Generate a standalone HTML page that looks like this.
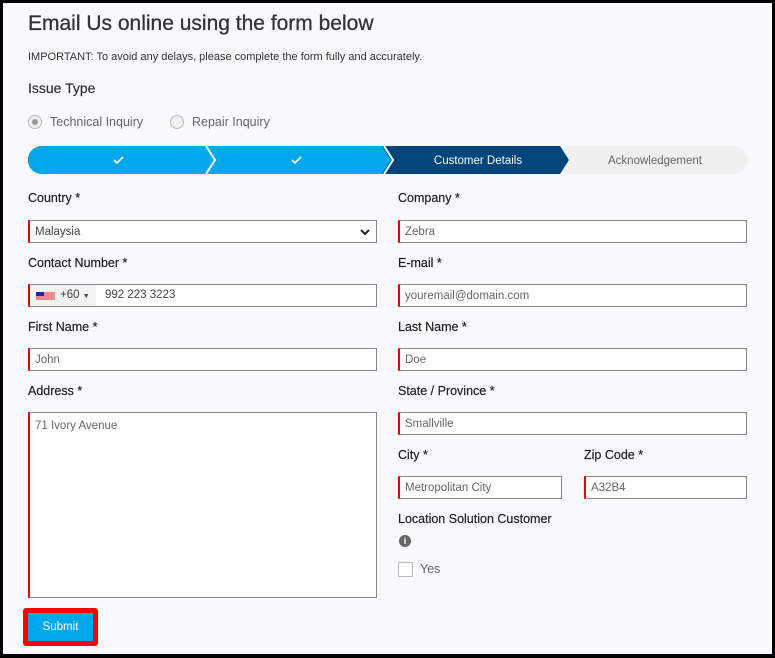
<!DOCTYPE html>
<html><head><meta charset="utf-8"><style>
*{box-sizing:border-box;margin:0;padding:0}
body{width:775px;height:658px;background:#000;font-family:"Liberation Sans",sans-serif;position:relative;overflow:hidden}
.pg{position:absolute;left:3px;top:3px;width:769px;height:651px;background:#f9f9fe}
.a{position:absolute}
.lbl{font-size:12.5px;color:#222;-webkit-text-stroke:0.2px #222}
.in{position:absolute;height:23px;background:#fff;border:1px solid #888;border-left:2px solid #e00;font-size:11.5px;color:#666;padding:5px 0 0 5px}
.rad{position:absolute;width:14px;height:14px;border-radius:50%;border:1px solid #bbb;background:#f0f0f0}
</style></head><body><div class="pg"></div>
<div class="a" style="left:28px;top:12px;font-size:21px;color:#333;-webkit-text-stroke:0.3px #333">Email Us online using the form below</div>
<div class="a" style="left:28px;top:51px;font-size:11px;color:#333">IMPORTANT: To avoid any delays, please complete the form fully and accurately.</div>
<div class="a" style="left:28px;top:80px;font-size:14px;color:#333;-webkit-text-stroke:0.2px #333">Issue Type</div>
<div class="rad" style="left:28px;top:115px"><div style="position:absolute;left:3px;top:3px;width:6px;height:6px;border-radius:50%;background:#999"></div></div>
<div class="a" style="left:50px;top:115px;font-size:12.5px;color:#666">Technical Inquiry</div>
<div class="rad" style="left:170px;top:115px"></div>
<div class="a" style="left:192px;top:115px;font-size:12.5px;color:#666">Repair Inquiry</div>
<svg class="a" style="left:28px;top:146px" width="719" height="28">
<rect x="0" y="0" width="719" height="28" rx="14" fill="#f0f0f0"/>
<path d="M14 0H532L541 14L532 28H14A14 14 0 0 1 14 0Z" fill="#00457c"/>
<path d="M14 0H354L363 14L354 28H14A14 14 0 0 1 14 0Z" fill="#00a8ea"/>
<path d="M178 0L187 14L178 28M356 0L365 14L356 28" stroke="#fff" stroke-width="2" fill="none"/>
<path d="M86 14l3 3l6-6M264 14l3 3l6-6" stroke="#fff" stroke-width="1.6" fill="none"/>
<text x="450" y="18" fill="#fff" font-size="11.5" text-anchor="middle" font-family="Liberation Sans">Customer Details</text>
<text x="627" y="18" fill="#666" font-size="11.5" text-anchor="middle" font-family="Liberation Sans">Acknowledgement</text>
</svg>
<div class="a lbl" style="left:28px;top:191px">Country *</div>
<div class="a lbl" style="left:398px;top:191px">Company *</div>
<div class="in" style="left:28px;top:220px;width:349px;color:#444">Malaysia<svg style="position:absolute;right:6px;top:7px" width="10" height="8"><path d="M1 2l4 4l4-4" stroke="#222" stroke-width="2" fill="none"/></svg></div>
<div class="in" style="left:398px;top:220px;width:349px">Zebra</div>
<div class="a lbl" style="left:28px;top:256px">Contact Number *</div>
<div class="a lbl" style="left:398px;top:256px">E-mail *</div>
<div class="in" style="left:28px;top:284px;width:349px;padding:0;color:#444"><div style="position:absolute;left:0;top:0;width:66px;height:21px;background:#f2f2f2"></div><div style="position:absolute;left:6px;top:7px;width:19px;height:8px;background:#e88;"><div style="width:8px;height:4px;background:#22a"></div></div><span style="position:absolute;left:30px;top:4px">+60 <span style="font-size:7px">▼</span></span><span style="position:absolute;left:75px;top:4px">992 223 3223</span></div>
<div class="in" style="left:398px;top:284px;width:349px">youremail@domain.com</div>
<div class="a lbl" style="left:28px;top:320px">First Name *</div>
<div class="a lbl" style="left:398px;top:320px">Last Name *</div>
<div class="in" style="left:28px;top:348px;width:349px">John</div>
<div class="in" style="left:398px;top:348px;width:349px">Doe</div>
<div class="a lbl" style="left:28px;top:384px">Address *</div>
<div class="a lbl" style="left:398px;top:384px">State / Province *</div>
<div class="in" style="left:28px;top:412px;width:349px;height:186px;padding-top:7px">71 Ivory Avenue</div>
<div class="in" style="left:398px;top:412px;width:349px">Smallville</div>
<div class="a lbl" style="left:398px;top:448px">City *</div>
<div class="a lbl" style="left:584px;top:448px">Zip Code *</div>
<div class="in" style="left:398px;top:476px;width:164px">Metropolitan City</div>
<div class="in" style="left:584px;top:476px;width:163px">A32B4</div>
<div class="a lbl" style="left:398px;top:512px">Location Solution Customer</div>
<div class="a" style="left:399px;top:535px;width:12px;height:12px;border-radius:50%;background:#666;color:#fff;font-size:9px;text-align:center;line-height:12px;font-weight:bold">i</div>
<div class="a" style="left:398px;top:562px;width:15px;height:15px;border:1px solid #bbb;background:#fff"></div>
<div class="a" style="left:420px;top:562px;font-size:12.5px;color:#666">Yes</div>
<div class="a" style="left:23px;top:608px;width:75px;height:38px;background:#f00;border-radius:3px"></div>
<div class="a" style="left:28px;top:613px;width:65px;height:28px;background:#00a8ea;color:#fff;font-size:11.5px;text-align:center;line-height:28px">Submit</div>
</body></html>
